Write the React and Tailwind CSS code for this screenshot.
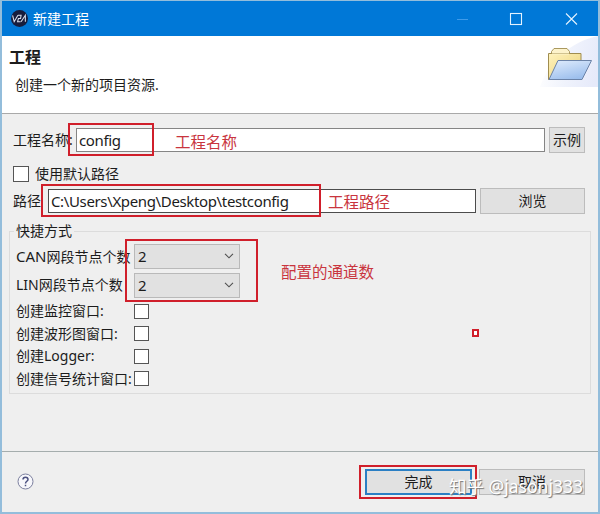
import React from "react";

const shortcuts = ["创建监控窗口:", "创建波形图窗口:", "创建Logger:", "创建信号统计窗口:"];

function Logo() {
  return (
    <svg width="17" height="17" viewBox="0 0 16 16" className="shrink-0">
      <circle cx="8" cy="8" r="8" fill="#171d3d" />
      <path d="M1.500 5l1.500 6 3.500-6M6.500 5H9.500L9 8H7L6.200 11H9M9.500 11l4-6v6" fill="none" stroke="#d9deeb" strokeWidth="1" />
    </svg>
  );
}

function WindowControls() {
  return (
    <svg width="124" height="14" viewBox="0 0 124 14" fill="none" className="shrink-0">
      <path d="M0 7.5h11" stroke="#3f9bea" />
      <rect x="53.5" y="1.5" width="11" height="11" stroke="#e3f2ff" strokeWidth="1.1" />
      <path d="M109 1.5l11 11M120 1.5l-11 11" stroke="#e3f2ff" strokeWidth="1.1" />
    </svg>
  );
}

function FolderBanner() {
  return (
    <svg width="58" height="51" viewBox="0 0 58 51" className="shrink-0">
      <defs>
        <linearGradient id="haze" x1="0" y1="0.4" x2="1" y2="0.6">
          <stop offset="0" stopColor="#ffffff" />
          <stop offset="0.5" stopColor="#f0f3fc" />
          <stop offset="1" stopColor="#e6eafa" />
        </linearGradient>
        <linearGradient id="back" x1="0" y1="0" x2="1" y2="1">
          <stop offset="0" stopColor="#fff3bd" />
          <stop offset="1" stopColor="#ead078" />
        </linearGradient>
        <linearGradient id="front" x1="0.2" y1="0" x2="0.7" y2="1">
          <stop offset="0" stopColor="#dceafc" />
          <stop offset="1" stopColor="#98bcec" />
        </linearGradient>
      </defs>
      <path d="M0 51C8 27 31 5 58 0v51z" fill="url(#haze)" />
      <path d="M8.500 43.500V17.500H41V43.500z" fill="url(#back)" stroke="#a08d50" />
      <path d="M11.500 17.500v-2l2.500-3h13l2.500 3v2z" fill="#fdf3cb" stroke="#a08d50" strokeWidth="0.9" />
      <path d="M12 18h17" stroke="#fdf3cb" />
      <path d="M9 43.500L18 24.500H51.500L42 43.500z" fill="url(#front)" stroke="#6b83a8" strokeLinejoin="round" />
    </svg>
  );
}

function Button({ children, className = "" }) {
  return (
    <button className={"flex shrink-0 items-center justify-center border border-[#bcbcbc] bg-[#e1e1e1] text-[14px] leading-none " + className}>
      {children}
    </button>
  );
}

function Check({ className = "" }) {
  return <span className={"block shrink-0 border border-[#555] bg-white " + className} />;
}

function Combo() {
  return (
    <div className="flex h-[25px] w-[106px] items-center justify-between border border-[#b9b9b9] bg-[#e1e1e1] pr-[5px] pl-[3px] text-[15px]">
      <span>2</span>
      <svg width="10" height="6" viewBox="0 0 10 6" fill="none">
        <path d="M1 .8l4 4 4-4" stroke="#505050" strokeWidth="1.1" />
      </svg>
    </div>
  );
}

function Mark({ className }) {
  return <div className={"pointer-events-none absolute border-2 border-[#d01f2b] " + className} />;
}

function Note({ className, children }) {
  return <div className={"absolute text-[15.5px] leading-[20px] text-[#c9353e] " + className}>{children}</div>;
}

export default function App() {
  return (
    <div className="relative h-[514px] w-[600px] overflow-hidden bg-[#93bddb] pt-px pl-[2px] whitespace-nowrap text-[#1c1c1c] [font-family:'Noto_Sans','Noto_Sans_CJK_SC',sans-serif]">
      <div className="flex h-[511px] w-[596px] flex-col bg-[#efefef]">
        <header className="flex h-[35px] shrink-0 items-center bg-[#0078d7] pr-[17px] pl-[9px] text-white">
          <Logo />
          <span className="ml-[5px] flex-1 text-[14px] leading-[20px]">新建工程</span>
          <WindowControls />
        </header>

        <section className="flex h-[78px] shrink-0 justify-between border-b border-[#a9a9a9] bg-white">
          <div className="pt-[10px] pl-[7px]">
            <h1 className="text-[16px] leading-[22px] font-bold">工程</h1>
            <p className="mt-[7px] pl-[6px] text-[14px] leading-[20px]">创建一个新的项目资源.</p>
          </div>
          <FolderBanner />
        </section>

        <main className="flex h-[337px] shrink-0 flex-col pt-[13px] text-[14px] leading-[20px]">
          <div className="flex h-[26px] items-center pr-[13px] pl-[11px]">
            <label className="w-[63px] shrink-0">工程名称:</label>
            <div className="flex h-[24px] flex-1 items-center border border-[#858585] bg-white pb-px pl-[2px] text-[15px] tracking-[-0.35px]">config</div>
            <Button className="ml-[4px] h-[26px] w-[36px]">示例</Button>
          </div>
          <div className="mt-[12px] flex h-[18px] items-center pl-[11px]">
            <Check className="mr-[6px] size-4" />
            <label>使用默认路径</label>
          </div>
          <div className="mt-[5px] flex h-[26px] items-center pr-[13px] pl-[11px]">
            <label className="w-[35px] shrink-0">路径</label>
            <div className="flex h-[24px] flex-1 items-center border border-[#4c4c4c] bg-white pb-px pl-[2px] text-[15px] tracking-[-0.36px]">
              C:\Users\Xpeng\Desktop\testconfig
            </div>
            <Button className="ml-[4px] h-[26px] w-[105px]">浏览</Button>
          </div>

          <fieldset className="mt-[7px] ml-[7px] h-[173px] w-[582px] border border-[#dcdcdc]">
            <legend className="ml-[4px] px-[2px] leading-[20px]">快捷方式</legend>
            <div className="mt-[2px] flex h-[26px] items-center pl-[6px]">
              <label className="w-[118px] shrink-0">
                <span className="text-[15px]">CAN</span>网段节点个数
              </label>
              <Combo />
            </div>
            <div className="mt-[3px] flex h-[26px] items-center pl-[6px]">
              <label className="w-[118px] shrink-0">LIN网段节点个数</label>
              <Combo />
            </div>
            <div className="mt-[2px] pl-[6px]">
              {shortcuts.map((s) => (
                <div key={s} className="flex h-[22.5px] items-center">
                  <label className="w-[118px] shrink-0">{s}</label>
                  <Check className="size-[15px]" />
                </div>
              ))}
            </div>
          </fieldset>
        </main>

        <footer className="flex flex-1 items-center border-t border-[#a5adad] pr-[13px] pb-px pl-[15px]">
          <svg width="17" height="17" viewBox="0 0 17 17" fill="none">
            <circle cx="8.500" cy="8.500" r="7.500" fill="#f7f7fb" stroke="#7b7f9e" />
            <path d="M6 6.500C6 3.500 11 3.500 11 6.500C11 8.300 8.500 8.300 8.500 10.500M8.500 11.700v1.500" stroke="#4c5180" strokeWidth="1.5" />
          </svg>
          <div className="flex-1" />
          <button className="flex h-[26px] w-[107px] items-center justify-center border-2 border-[#2a7fc4] bg-[#e1e1e1] text-[14px]">完成</button>
          <Button className="ml-[7px] h-[26px] w-[106px]">取消</Button>
        </footer>
      </div>

      <Mark className="top-[123px] left-[68px] h-[33px] w-[86px]" />
      <Mark className="top-[184px] left-[41px] h-[33px] w-[280px]" />
      <Mark className="top-[239px] left-[125px] h-[63px] w-[133px]" />
      <Mark className="top-[465px] left-[359px] h-[34px] w-[118px]" />
      <Mark className="top-[329px] left-[472px] h-[8px] w-[7px] bg-white" />
      <Note className="top-[132px] left-[175px]">工程名称</Note>
      <Note className="top-[192px] left-[328px]">工程路径</Note>
      <Note className="top-[262px] left-[281px]">配置的通道数</Note>
      <div className="absolute top-[474px] left-[449px] text-[17.5px] leading-[24px] text-white [text-shadow:1px_1px_1px_#777]">知乎 @jasonj333</div>
    </div>
  );
}
